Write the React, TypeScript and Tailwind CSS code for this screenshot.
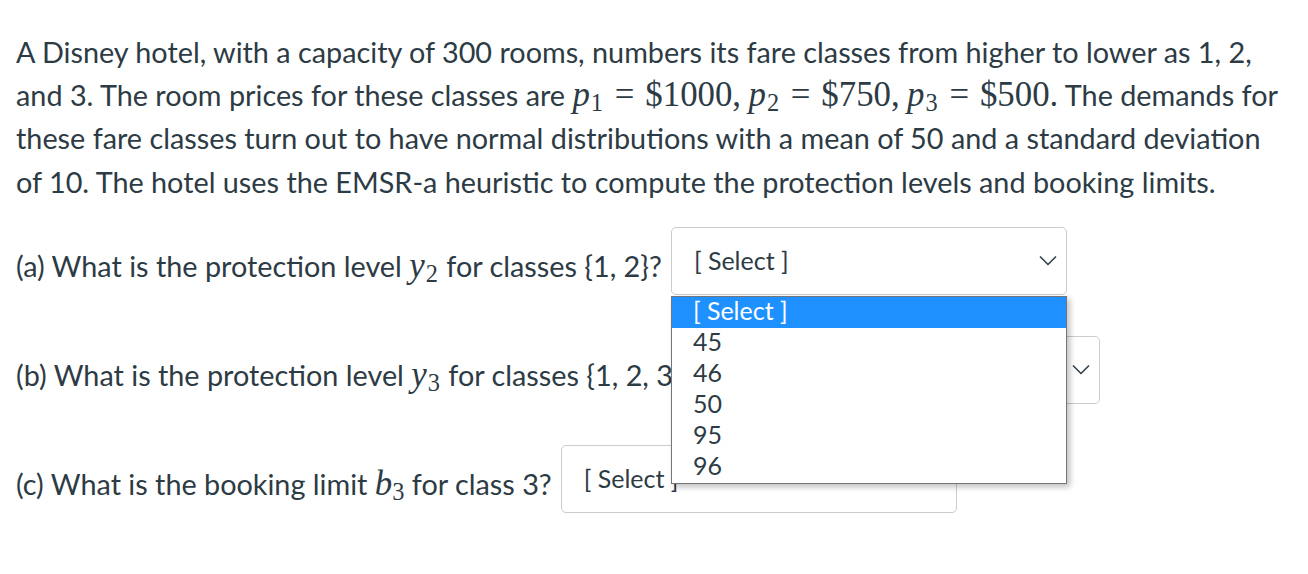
import React from 'react';

const serif = { fontFamily: '"Liberation Serif", "Times New Roman", serif' };

function V({ v, sub, tight }: { v: string; sub?: string; tight?: boolean }) {
  return (
    <span className={tight ? 'text-[1.21em] leading-none whitespace-nowrap' : 'text-[1.21em] leading-none whitespace-nowrap pr-[1px]'} style={serif}>
      <span className="italic">{v}</span>
      {sub && <span className={tight ? 'text-[0.7em] relative top-[0.2em]' : 'text-[0.7em] relative top-[0.2em] pl-[1px]'}>{sub}</span>}
    </span>
  );
}

function Num({ children }: { children: React.ReactNode }) {
  return (
    <span className="text-[1.21em] leading-none whitespace-nowrap" style={serif}>
      {children}
    </span>
  );
}

function Eq() {
  return (
    <span className="text-[1.21em] leading-none mx-[0.31em]" style={serif}>
      =
    </span>
  );
}

function Chevron() {
  return (
    <svg width="18" height="11" viewBox="0 0 18 11" className="shrink-0">
      <polyline points="1,1.5 9,9.5 17,1.5" fill="none" stroke="#2d3b45" strokeWidth="1.5" />
    </svg>
  );
}

function SelectBox() {
  return (
    <div className="w-[396px] h-[68px] border border-[#c7cdd1] rounded-[5px] bg-white flex items-center justify-between pl-[22px] pr-[9px] shrink-0">
      <span className="text-[25px] text-[#2d3b45]">[ Select ]</span>
      <Chevron />
    </div>
  );
}

const options = ['45', '46', '50', '95', '96'];

export default function App() {
  return (
    <div
      className="min-h-screen bg-white text-[#2d3b45] pl-4 pt-[31px] text-[28.8px]"
      style={{ fontFamily: 'Lato, "Noto Sans", sans-serif' }}
    >
      <p className="leading-[43.2px] whitespace-nowrap">
        A Disney hotel, with a capacity of 300 rooms, numbers its fare classes from higher to lower as 1, 2,
        <br />
        and 3. The room prices for these classes are <V v="p" sub="1" />
        <Eq />
        <Num>$1000,</Num> <V v="p" sub="2" />
        <Eq />
        <Num>$750,</Num> <V v="p" sub="3" />
        <Eq />
        <Num>$500.</Num> The demands for
        <br />
        these fare classes turn out to have normal distributions with a mean of 50 and a standard deviation
        <br />
        of 10. The hotel uses the EMSR-a heuristic to compute the protection levels and booking limits.
      </p>

      <div className="mt-[23px] flex flex-col gap-[41px]">
        <div className="flex items-center gap-[9px]">
          <span className="pt-3 whitespace-nowrap">
            (a) What is the protection level <V v="y" sub="2" /> for classes {'{'}1, 2{'}'}?
          </span>
          <div className="relative">
            <SelectBox />
            <div className="absolute left-0 top-[69px] w-[396px] bg-white border border-[#767676] shadow-[3px_3px_6px_rgba(0,0,0,0.25)] z-10 text-[25px]">
              <div className="h-[31px] leading-[27px] pl-[21px] bg-[#1e90ff] text-white">[ Select ]</div>
              {options.map((o) => (
                <div key={o} className="h-[31px] leading-[27px] pl-[21px] text-[#2d3b45]">
                  {o}
                </div>
              ))}
            </div>
          </div>
        </div>

        <div className="flex items-center gap-[9px]">
          <span className="pt-3 whitespace-nowrap">
            (b) What is the protection level <V v="y" sub="3" /> for classes {'{'}1, 2, 3{'}'}?
          </span>
          <SelectBox />
        </div>

        <div className="flex items-center gap-[9px]">
          <span className="pt-3 whitespace-nowrap">
            (c) What is the booking limit <V v="b" sub="3" tight /> for class 3?
          </span>
          <SelectBox />
        </div>
      </div>
    </div>
  );
}
